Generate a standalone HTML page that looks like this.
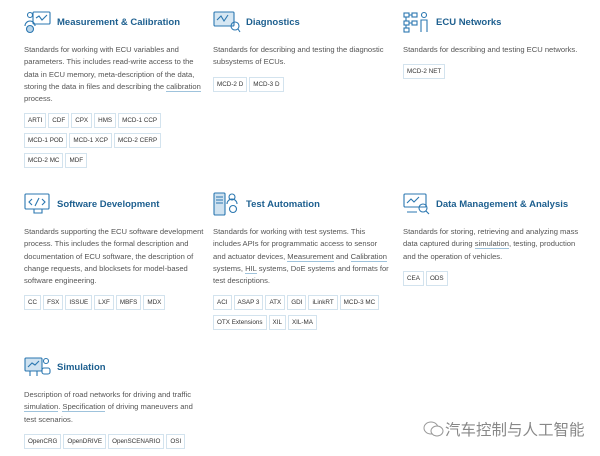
<!DOCTYPE html>
<html><head><meta charset="utf-8"><style>
*{margin:0;padding:0;box-sizing:border-box}
body{width:600px;height:456px;background:#fff;font-family:"Liberation Sans",sans-serif;position:relative;overflow:hidden}
.s{position:absolute;width:180px}
.h{position:relative;height:26px}
.ic{position:absolute;left:0;top:0;width:28px;height:24px}
.t{position:absolute;left:33px;top:7px;font-size:9.5px;font-weight:bold;color:#1d5f8f;white-space:nowrap}
.d{font-size:7.6px;line-height:12.3px;color:#555;margin-top:8px}
.d u{text-decoration:none;border-bottom:1px solid #9fc3dc}
.tags{margin-top:8px;line-height:0;width:170px}
.tg{display:inline-block;border:1px solid #d3e3ee;font-size:6.3px;line-height:13px;padding:0 3px;color:#333;margin:0 2px 5px 0;vertical-align:top}
.wm{position:absolute;left:423px;top:418px;font-size:15.5px;color:#888;font-family:"Liberation Sans","Noto Sans CJK SC",sans-serif;white-space:nowrap}
</style></head><body>

<div class="s" style="left:24px;top:10px">
<div class="h"><svg class="ic" viewBox="0 0 28 24" fill="none" stroke="#2b77b0" stroke-width="1.1"><rect x="9" y="2" width="17" height="12" rx="1"/><path d="M12 8l3-2 3 4 5-5"/><circle cx="6" cy="5" r="2.5"/><path d="M1 16a5 5 0 0 1 10 0"/><circle cx="6" cy="19" r="3.5" fill="#bcd6ea"/></svg><div class="t">Measurement &amp; Calibration</div></div>
<div class="d">Standards for working with ECU variables and parameters. This includes read-write access to the data in ECU memory, meta-description of the data, storing the data in files and describing the <u>calibration</u> process.</div>
<div class="tags"><span class="tg">ARTI</span><span class="tg">CDF</span><span class="tg">CPX</span><span class="tg">HMS</span><span class="tg">MCD-1 CCP</span><br><span class="tg">MCD-1 POD</span><span class="tg">MCD-1 XCP</span><span class="tg">MCD-2 CERP</span><br><span class="tg">MCD-2 MC</span><span class="tg">MDF</span></div>
</div>

<div class="s" style="left:213px;top:10px">
<div class="h"><svg class="ic" viewBox="0 0 28 24" fill="none" stroke="#2b77b0" stroke-width="1.1"><rect x="1" y="2" width="20" height="14" rx="1" fill="#d6e7f3"/><path d="M4 10l4-4 3 5 4-6"/><circle cx="22" cy="16" r="4"/><path d="M25 19l2 3"/></svg><div class="t">Diagnostics</div></div>
<div class="d">Standards for describing and testing the diagnostic subsystems of ECUs.</div>
<div class="tags"><span class="tg">MCD-2 D</span><span class="tg">MCD-3 D</span></div>
</div>

<div class="s" style="left:403px;top:10px">
<div class="h"><svg class="ic" viewBox="0 0 28 24" fill="none" stroke="#2b77b0" stroke-width="1.1"><rect x="1" y="3" width="5" height="4"/><rect x="9" y="3" width="5" height="4"/><rect x="1" y="11" width="5" height="4"/><rect x="9" y="11" width="5" height="4"/><rect x="1" y="18" width="5" height="4"/><path d="M6 5h3M6 13h3M3 7v4M3 15v3"/><circle cx="21" cy="5" r="2.5"/><path d="M18 22V10h6v12"/></svg><div class="t">ECU Networks</div></div>
<div class="d">Standards for describing and testing ECU networks.</div>
<div class="tags"><span class="tg">MCD-2 NET</span></div>
</div>

<div class="s" style="left:24px;top:192px">
<div class="h"><svg class="ic" viewBox="0 0 28 24" fill="none" stroke="#2b77b0" stroke-width="1.1"><rect x="1" y="2" width="24" height="15" rx="1"/><path d="M8 7l-3 3 3 3M18 7l3 3-3 3M15 6l-4 8"/><path d="M10 17v4h8v-4"/></svg><div class="t">Software Development</div></div>
<div class="d">Standards supporting the ECU software development process. This includes the formal description and documentation of ECU software, the description of change requests, and blocksets for model-based software engineering.</div>
<div class="tags"><span class="tg">CC</span><span class="tg">FSX</span><span class="tg">ISSUE</span><span class="tg">LXF</span><span class="tg">MBFS</span><span class="tg">MDX</span></div>
</div>

<div class="s" style="left:213px;top:192px;width:176px">
<div class="h"><svg class="ic" viewBox="0 0 28 24" fill="none" stroke="#2b77b0" stroke-width="1.1"><rect x="1" y="1" width="11" height="22" rx="1" fill="#cfe2f0"/><path d="M3 5h7M3 8h7M3 11h7"/><circle cx="19" cy="5" r="3"/><circle cx="20" cy="17" r="3.5"/><path d="M14 12a5 5 0 0 1 10 0"/></svg><div class="t">Test Automation</div></div>
<div class="d">Standards for working with test systems. This<br>includes APIs for programmatic access to sensor and actuator devices, <u>Measurement</u> and <u>Calibration</u> systems, <u>HIL</u> systems, DoE systems and formats for test descriptions.</div>
<div class="tags" style="width:176px"><span class="tg">ACI</span><span class="tg">ASAP 3</span><span class="tg">ATX</span><span class="tg">GDI</span><span class="tg">iLinkRT</span><span class="tg">MCD-3 MC</span><br><span class="tg">OTX Extensions</span><span class="tg">XIL</span><span class="tg">XIL-MA</span></div>
</div>

<div class="s" style="left:403px;top:192px">
<div class="h"><svg class="ic" viewBox="0 0 28 24" fill="none" stroke="#2b77b0" stroke-width="1.1"><rect x="1" y="2" width="22" height="13" rx="1"/><path d="M4 11l4-4 3 3 5-5"/><circle cx="20" cy="16" r="4"/><path d="M23 19l3 3M4 20h10"/></svg><div class="t">Data Management &amp; Analysis</div></div>
<div class="d">Standards for storing, retrieving and analyzing mass data captured during <u>simulation</u>, testing, production and the operation of vehicles.</div>
<div class="tags"><span class="tg">CEA</span><span class="tg">ODS</span></div>
</div>

<div class="s" style="left:24px;top:355px">
<div class="h"><svg class="ic" viewBox="0 0 28 24" fill="none" stroke="#2b77b0" stroke-width="1.1"><rect x="1" y="3" width="17" height="13" rx="1" fill="#cfe2f0"/><path d="M4 12l4-4 3 2 4-4M6 16v5M13 16v5"/><circle cx="22" cy="6" r="2.5"/><rect x="18" y="13" width="8" height="6" rx="2"/></svg><div class="t">Simulation</div></div>
<div class="d">Description of road networks for driving and traffic <u>simulation</u>. <u>Specification</u> of driving maneuvers and test scenarios.</div>
<div class="tags"><span class="tg">OpenCRG</span><span class="tg">OpenDRIVE</span><span class="tg">OpenSCENARIO</span><span class="tg">OSI</span></div>
</div>

<div class="wm"><svg width="22" height="16" viewBox="0 0 22 16" fill="none" stroke="#999" stroke-width="1" style="vertical-align:-2px"><ellipse cx="8" cy="7" rx="7" ry="6"/><ellipse cx="14" cy="10" rx="6" ry="5" fill="#fff"/></svg>汽车控制与人工智能</div>
</body></html>
